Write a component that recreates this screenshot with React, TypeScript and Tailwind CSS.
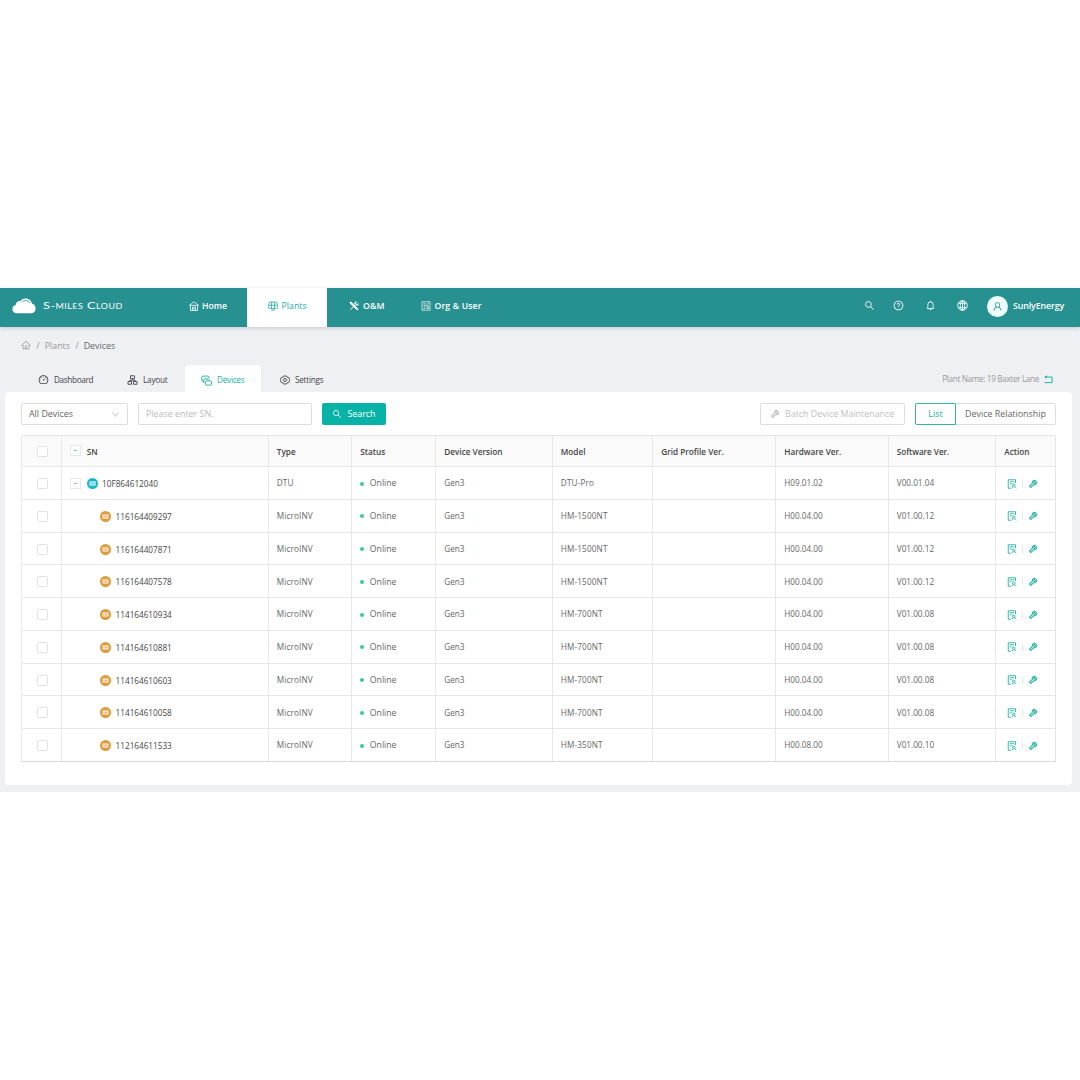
import type { ReactNode } from 'react';
import {
  AiOutlineBell,
  AiOutlineDashboard,
  AiOutlineDown,
  AiOutlineHome,
  AiOutlineQuestionCircle,
  AiOutlineSearch,
  AiOutlineTool,
  AiOutlineUser,
} from 'react-icons/ai';

type Row = { sn: string; type: string; model: string; hw: string; sw: string; root?: boolean };

const rows: Row[] = [
  { sn: '10F864612040', type: 'DTU', model: 'DTU-Pro', hw: 'H09.01.02', sw: 'V00.01.04', root: true },
  { sn: '116164409297', type: 'MicroINV', model: 'HM-1500NT', hw: 'H00.04.00', sw: 'V01.00.12' },
  { sn: '116164407871', type: 'MicroINV', model: 'HM-1500NT', hw: 'H00.04.00', sw: 'V01.00.12' },
  { sn: '116164407578', type: 'MicroINV', model: 'HM-1500NT', hw: 'H00.04.00', sw: 'V01.00.12' },
  { sn: '114164610934', type: 'MicroINV', model: 'HM-700NT', hw: 'H00.04.00', sw: 'V01.00.08' },
  { sn: '114164610881', type: 'MicroINV', model: 'HM-700NT', hw: 'H00.04.00', sw: 'V01.00.08' },
  { sn: '114164610603', type: 'MicroINV', model: 'HM-700NT', hw: 'H00.04.00', sw: 'V01.00.08' },
  { sn: '114164610058', type: 'MicroINV', model: 'HM-700NT', hw: 'H00.04.00', sw: 'V01.00.08' },
  { sn: '112164611533', type: 'MicroINV', model: 'HM-350NT', hw: 'H00.08.00', sw: 'V01.00.10' },
];

const columns = 'grid grid-cols-[40px_206.5px_83.5px_84px_116.5px_100.5px_123px_112.5px_107.5px_60px]';

function Svg({ children, className }: { children: ReactNode; className: string }) {
  return (
    <svg viewBox="0 0 20 20" fill="none" stroke="currentColor" strokeWidth="1.6" strokeLinejoin="round" className={className}>
      {children}
    </svg>
  );
}

function CloudLogo() {
  return (
    <svg viewBox="0 0 24 16" className="mb-[4px] h-4 w-6 shrink-0">
      <path
        d="M5 15.3C2.200 15.300.4 13.500.4 11.200c0-2.300 1.300-3.700 3.300-4.100C3.800 4.300 5.800 2.700 8.400 2.900 9.800 1.300 11.500.5 13.500.5c3.400 0 6.100 2.200 6.600 5.300 2.200.5 3.500 2.200 3.500 4.600 0 2.900-2 4.900-4.700 4.900z"
        fill="#fff"
      />
      <path d="M10 4.200c2-2.300 6-2.300 7.800.8" fill="none" stroke="#279090" strokeWidth=".8" />
    </svg>
  );
}

function HouseIcon() {
  return (
    <Svg className="mb-px size-[10px]">
      <path d="M1 8.500 10 1.500l9 7H1ZM3 9v10h14V9M7 19v-7h6v7M7 15.500h6" />
    </Svg>
  );
}

function PanelIcon() {
  return (
    <Svg className="mb-px size-[10px]">
      <path d="M4 2h12a2 2 0 0 1 2 1.500L19 13a2 2 0 0 1-2 2H3a2 2 0 0 1-2-2l1-9.500A2 2 0 0 1 4 2ZM1.500 8.500h17M7.300 2 6.800 15M12.700 2l.5 13M6 18.300h8" />
    </Svg>
  );
}

function CrossToolsIcon() {
  return (
    <Svg className="mb-px size-[10px]">
      <path d="m2 2 3.500 1L18 16.500 16.500 18 3 5.500Z" fill="currentColor" />
      <path d="M3 17.500 14 6.500M18.500 5.500 15.500 7 13 4.500 14.500 1.500C11.500 2 10.500 4 11 6.500M13.500 9c2.500.5 4.500-.5 5-3.500" strokeWidth="2" />
    </Svg>
  );
}

function OrgIcon() {
  return (
    <Svg className="mb-px size-[10px]">
      <path d="M2 1.500h16v17H2zM5 5.500h4M11.500 5.500H15M5 8.500h10M5 11.500h4M5 15h4M12 11.500h3V15h-3z" strokeWidth="1.400" />
    </Svg>
  );
}

function GlobeIcon() {
  return (
    <Svg className="size-[11px]">
      <circle cx="10" cy="10" r="8.700" />
      <ellipse cx="10" cy="10" rx="4" ry="8.700" />
      <path d="M10 1v18M2.500 6h15M2.500 14h15" />
    </Svg>
  );
}

function LayoutIcon() {
  return (
    <Svg className="h-[10px] w-[11px]">
      <path d="M6 1.500h8v6H6zM1 13h7v5.500H1zM12 13h7v5.500h-7zM10 7.500v3M4.500 13v-2.500h11V13" strokeWidth="1.800" />
    </Svg>
  );
}

function DevicesIcon() {
  return (
    <Svg className="size-[11px]">
      <path
        d="M5 11.500H3.500a2 2 0 0 1-2-2V4a2 2 0 0 1 2-2h9a2 2 0 0 1 2 2v3M5 14.500V9a2 2 0 0 1 2-2h4a2 2 0 0 1 2 2v1.500M10 10.500h7a2 2 0 0 1 2 2v4a2 2 0 0 1-2 2h-7a2 2 0 0 1-2-2v-4a2 2 0 0 1 2-2Z"
        strokeWidth="1.700"
      />
    </Svg>
  );
}

function GearIcon() {
  return (
    <Svg className="size-[10px]">
      <path d="M7 2h6l1.500 2.500 3 .5 1.700 3.500-1.200 1.500 1.200 1.500L17.500 15l-3 .5L13 18H7l-1.500-2.500-3-.5L.8 11.500 2 10 .8 8.500 2.500 5l3-.5L7 2Z" strokeWidth="1.800" />
      <path d="M8 6.800h4l2 3.200-2 3.200H8L6 10l2-3.200ZM8.500 10h3" strokeWidth="1.500" />
    </Svg>
  );
}

function ReturnIcon() {
  return (
    <Svg className="h-[9px] w-[9px]">
      <path d="M2 4.500h16v12.500H1" strokeWidth="2.200" />
      <path d="M1 4.500 6 .8v7.400Z" fill="currentColor" stroke="none" />
    </Svg>
  );
}

function ReportIcon() {
  return (
    <Svg className="size-[10px]">
      <path d="M8 18.500H2.500v-17h14.500V8M5.500 5.500h8.500M5.500 9.500h4" strokeWidth="1.800" />
      <circle cx="13.500" cy="12.500" r="2.500" strokeWidth="1.800" />
      <path d="M10.500 18.500 12 15.500M15 15l3 3.500" strokeWidth="1.800" />
    </Svg>
  );
}

function DeviceBadge({ root }: { root?: boolean }) {
  return (
    <svg viewBox="0 0 11 11" className={root ? 'size-[11px] shrink-0 text-[#1bb5c9]' : 'size-[11px] shrink-0 text-[#dc9b3c]'}>
      <circle cx="5.500" cy="5.500" r="5.500" fill="currentColor" />
      <rect x="2.200" y="3.200" width="6.600" height="4.500" rx=".8" fill="#fff" fillOpacity=".65" />
      <path d="M3 5.600h5" stroke="currentColor" strokeWidth=".6" strokeOpacity=".7" />
    </svg>
  );
}

function Checkbox() {
  return <span className="size-[11px] rounded-[1.500px] border border-[#e2e2e2] bg-white" />;
}

function Toggle() {
  return (
    <span className="flex size-[11px] shrink-0 items-center justify-center border border-[#e8e8e8] bg-white">
      <span className="h-px w-[3px] bg-[#7cc0c9]" />
    </span>
  );
}

function Cell({ children, className = '' }: { children?: ReactNode; className?: string }) {
  return <div className={`flex items-center border-l border-[#e8e8e8] pt-[1.500px] pl-[8.300px] whitespace-nowrap ${className}`}>{children}</div>;
}

function Header() {
  return (
    <header className="relative flex h-[39px] items-center bg-[#279090] text-[8.700px] font-semibold text-white shadow-[0_1px_4px_rgba(0,21,41,0.18)]">
      <div className="flex w-[177px] items-center pl-3">
        <CloudLogo />
        <span className="mb-[4px] ml-[7px] origin-left scale-x-[1.280] font-['Lato'] text-[10px] font-normal tracking-[0.350px] whitespace-nowrap [font-variant-caps:small-caps]">
          S-miles Cloud
        </span>
      </div>
      <nav className="flex h-full flex-1">
        <a className="flex w-[70.400px] items-center gap-[3px] pb-[1.800px] pl-[12px]"><HouseIcon />Home</a>
        <a className="flex w-[80px] items-center gap-[3.500px] bg-white pb-[1.800px] pl-[20.500px] font-medium tracking-[0.100px] text-[#20ac9f]"><PanelIcon />Plants</a>
        <a className="flex w-[72px] items-center gap-[4px] pb-[1.800px] pl-[21.500px] tracking-[0.200px]"><CrossToolsIcon />O&amp;M</a>
        <a className="flex items-center gap-[3.500px] pb-[1.800px] pl-[21.500px] tracking-[0.150px]"><OrgIcon />Org &amp; User</a>
      </nav>
      <div className="flex items-center pr-[16px] pb-[3px]">
        <AiOutlineSearch className="mr-[18.500px] mb-[2px] size-[11px]" />
        <AiOutlineQuestionCircle className="mr-[21px] mb-[2px] size-[11px]" />
        <AiOutlineBell className="mr-[21px] mb-[2px] size-[11px]" />
        <span className="mb-[2px]"><GlobeIcon /></span>
        <span className="mr-[5px] ml-[19px] flex size-[21px] items-center justify-center rounded-full bg-[#effffb] text-[#279090]">
          <AiOutlineUser className="size-[11px]" />
        </span>
        <span className="text-[8.900px] tracking-[-0.150px]">SunlyEnergy</span>
      </div>
    </header>
  );
}

export default function App() {
  return (
    <div className="h-[1080px] w-[1080px] overflow-hidden bg-white pt-[288px] font-['Open_Sans','Noto_Sans',sans-serif] text-[#666]">
      <Header />
      <main className="h-[465px] bg-[#eff0f4] px-[5px] pr-2">
        <div className="flex h-[37px] items-center gap-[5.200px] pl-4 text-[8.900px] text-[#999]">
          <AiOutlineHome className="mb-px size-[10px]" />
          <span>/</span>
          <span>Plants</span>
          <span>/</span>
          <span className="text-[#666]">Devices</span>
        </div>
        <div className="mt-px flex h-[27px] items-center text-[8.200px] text-[#444]">
          <div className="flex w-[113px] items-center gap-[5px] pt-[3px] pl-[33px] tracking-[-0.350px]"><AiOutlineDashboard className="size-[11px]" />Dashboard</div>
          <div className="flex w-[67px] items-center gap-[5px] pt-[3px] pl-[9px] tracking-[-0.200px]"><LayoutIcon />Layout</div>
          <div className="flex h-full w-[76px] items-center gap-[5px] rounded-t-[3px] bg-white pt-[3px] pl-4 tracking-[-0.250px] text-[#20b0a2] shadow-[0_0_1px_rgba(0,0,0,0.12)] [clip-path:inset(-2px_-2px_0_-2px)]"><DevicesIcon />Devices</div>
          <div className="flex items-center gap-[5.500px] pt-[3px] pl-[18.500px] tracking-[-0.250px]"><GearIcon />Settings</div>
          <div className="ml-auto flex items-center gap-[5px] pt-[2px] pr-[19px] text-[8.200px] tracking-[-0.350px] text-[#999]">
            Plant Name: 19 Baxter Lane
            <span className="text-[#20b0a2]"><ReturnIcon /></span>
          </div>
        </div>
        <section className="h-[393px] rounded-[4px] bg-white px-4 pt-[11px]">
          <div className="flex h-[22px] text-[8.900px]">
            <div className="flex w-[107px] items-center justify-between rounded-[2px] border border-[#dedede] pr-[7px] pl-[7px]">
              All Devices
              <AiOutlineDown className="size-[9px] text-[#bbb]" />
            </div>
            <div className="ml-[10px] flex w-[174px] items-center rounded-[2px] border border-[#dedede] pl-[7px] text-[#bbb]">Please enter SN.</div>
            <button className="ml-[10px] flex w-[64px] items-center justify-center gap-[5px] rounded-[2px] bg-[#07b3a7] text-white">
              <AiOutlineSearch className="size-[10px]" />Search
            </button>
            <button className="ml-auto flex w-[145px] items-center gap-[5px] rounded-[2px] border border-[#dedede] pl-[9px] whitespace-nowrap text-[#bfbfbf]">
              <AiOutlineTool className="size-[10px] stroke-current stroke-[50px]" />Batch Device Maintenance
            </button>
            <button className="ml-[10px] flex w-[41px] items-center justify-center rounded-l-[2px] border border-[#36b2aa] text-[#20b0a2]">List</button>
            <button className="flex w-[100px] items-center justify-center rounded-r-[2px] border border-l-0 border-[#dedede] whitespace-nowrap">Device Relationship</button>
          </div>
          <div className="mt-[10px] w-[1035px] rounded-t-[2px] border border-l-0 border-[#e4e4e4] border-b-[#d8d8d8]">
            <div className={`${columns} h-[30px] bg-[#fafafa] text-[8.200px] font-semibold text-[#444]`}>
              <Cell className="justify-center pr-[7px]"><Checkbox /></Cell>
              <Cell className="gap-[5.500px]"><span className="mb-[2px]"><Toggle /></span>SN</Cell>
              <Cell>Type</Cell>
              <Cell>Status</Cell>
              <Cell>Device Version</Cell>
              <Cell>Model</Cell>
              <Cell>Grid Profile Ver.</Cell>
              <Cell>Hardware Ver.</Cell>
              <Cell className="tracking-[-0.050px]">Software Ver.</Cell>
              <Cell>Action</Cell>
            </div>
            {rows.map((r) => (
              <div key={r.sn} className={`${columns} h-[32.750px] border-t border-[#e8e8e8] text-[8.200px]`}>
                <Cell className="justify-center pr-[7px]"><Checkbox /></Cell>
                <Cell className={r.root ? '' : 'pl-[38.300px]'}>
                  {r.root && <span className="mr-[5.500px]"><Toggle /></span>}
                  <DeviceBadge root={r.root} />
                  <span className="ml-[4.300px] pt-[1.500px] text-[#444]">{r.sn}</span>
                </Cell>
                <Cell className="tracking-[0.120px]">{r.type}</Cell>
                <Cell>
                  <span className="mr-[5.500px] size-[4px] rounded-full bg-[#3cc995]" />
                  <span className="pt-[0.500px] text-[8.700px]">Online</span>
                </Cell>
                <Cell>Gen3</Cell>
                <Cell className="tracking-[0.150px]">{r.model}</Cell>
                <Cell />
                <Cell>{r.hw}</Cell>
                <Cell>{r.sw}</Cell>
                <Cell className="pl-[11px] text-[#20b0a2]">
                  <ReportIcon />
                  <span className="mx-[5px] h-[7px] w-px bg-[#e6e6e6]" />
                  <AiOutlineTool className="size-[10px] stroke-current stroke-[50px]" />
                </Cell>
              </div>
            ))}
          </div>
        </section>
      </main>
    </div>
  );
}
